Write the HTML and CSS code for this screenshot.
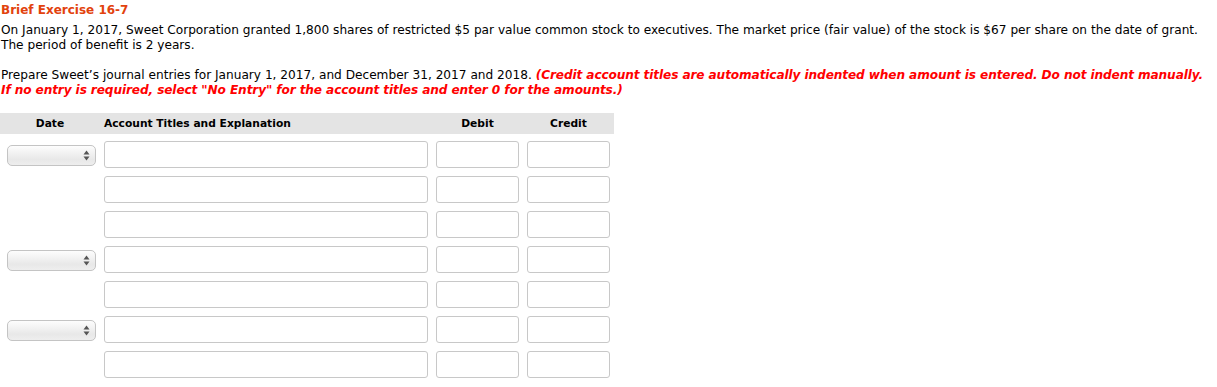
FILE: index.html
```html
<!DOCTYPE html>
<html lang="en">
<head>
  <meta charset="UTF-8" />
  <title>Brief Exercise 16-7</title>
  <link rel="stylesheet" href="styles.css">
</head>
<body>
  <h2 class="exercise-title">Brief Exercise 16-7</h2>

  <p class="question">
    On January 1, 2017, Sweet Corporation granted 1,800 shares of restricted $5 par value common stock to executives. The market price (fair value) of the stock is $67 per share on the date of grant. The period of benefit is 2 years.
    <br><br>
    Prepare Sweet’s journal entries for January 1, 2017, and December 31, 2017 and 2018.
    <span class="warning">(Credit account titles are automatically indented when amount is entered. Do not indent manually.</span><br>
    <span class="warning">If no entry is required, select "No Entry" for the account titles and enter 0 for the amounts.)</span>
  </p>

  <div class="journal">
    <div class="journal-head">
      <div class="col-date">Date</div>
      <div class="col-account">Account Titles and Explanation</div>
      <div class="col-amount">Debit</div>
      <div class="col-amount">Credit</div>
    </div>

    <div class="journal-row">
      <div class="cell"><div class="date-select"><svg width="7" height="11" viewBox="0 0 7 11"><path d="M3.5 0.5 L6.5 4.5 L0.5 4.5 Z M0.5 6.5 L6.5 6.5 L3.5 10.5 Z" fill="#555"/></svg></div></div>
      <div class="cell"><input type="text" class="field"></div>
      <div class="cell"><input type="text" class="field"></div>
      <div class="cell"><input type="text" class="field"></div>
    </div>
    <div class="journal-row">
      <div class="cell"></div>
      <div class="cell"><input type="text" class="field"></div>
      <div class="cell"><input type="text" class="field"></div>
      <div class="cell"><input type="text" class="field"></div>
    </div>
    <div class="journal-row">
      <div class="cell"></div>
      <div class="cell"><input type="text" class="field"></div>
      <div class="cell"><input type="text" class="field"></div>
      <div class="cell"><input type="text" class="field"></div>
    </div>

    <div class="journal-row">
      <div class="cell"><div class="date-select"><svg width="7" height="11" viewBox="0 0 7 11"><path d="M3.5 0.5 L6.5 4.5 L0.5 4.5 Z M0.5 6.5 L6.5 6.5 L3.5 10.5 Z" fill="#555"/></svg></div></div>
      <div class="cell"><input type="text" class="field"></div>
      <div class="cell"><input type="text" class="field"></div>
      <div class="cell"><input type="text" class="field"></div>
    </div>
    <div class="journal-row">
      <div class="cell"></div>
      <div class="cell"><input type="text" class="field"></div>
      <div class="cell"><input type="text" class="field"></div>
      <div class="cell"><input type="text" class="field"></div>
    </div>

    <div class="journal-row">
      <div class="cell"><div class="date-select"><svg width="7" height="11" viewBox="0 0 7 11"><path d="M3.5 0.5 L6.5 4.5 L0.5 4.5 Z M0.5 6.5 L6.5 6.5 L3.5 10.5 Z" fill="#555"/></svg></div></div>
      <div class="cell"><input type="text" class="field"></div>
      <div class="cell"><input type="text" class="field"></div>
      <div class="cell"><input type="text" class="field"></div>
    </div>
    <div class="journal-row">
      <div class="cell"></div>
      <div class="cell"><input type="text" class="field"></div>
      <div class="cell"><input type="text" class="field"></div>
      <div class="cell"><input type="text" class="field"></div>
    </div>
  </div>
</body>
</html>
```

FILE: styles.css
```css
:root {
  --title: #e2420d;
  --warn: #ff0000;
  --head-bg: #e4e4e4;
  --border: #c8c8c8;
  --text: #000;
}

* {
  box-sizing: border-box;
}

body {
  margin: 0;
  padding: 3px 0 0;
  font-family: 'DejaVu Sans', sans-serif;
  font-size: 12.15px;
  line-height: 15px;
  color: var(--text);
  background: #fff;
}

.exercise-title {
  margin: 0 0 5px 1px;
  font-size: 12px;
  line-height: 15px;
  font-weight: bold;
  color: var(--title);
}

.question {
  margin: 0 0 15px 1px;
}

.warning {
  color: var(--warn);
  font-weight: bold;
  font-style: italic;
  letter-spacing: -0.12px;
}

.journal {
  width: 614px;
}

.journal-head,
.journal-row {
  display: grid;
  grid-template-columns: 100px 332px 91px 91px;
}

.journal-head {
  background: var(--head-bg);
  height: 21px;
  align-items: center;
  font-size: 10.7px;
  font-weight: bold;
  margin-bottom: 3px;
}

.col-date,
.col-amount {
  text-align: center;
}

.col-account {
  padding-left: 4px;
}

.cell {
  padding: 4px;
  display: flex;
  align-items: center;
}

.cell:first-child {
  padding-left: 7px;
}

.field {
  width: 100%;
  height: 27px;
  margin: 0;
  border: 1px solid var(--border);
  border-radius: 3px;
  background: #fff;
  font: inherit;
}

.date-select {
  width: 89px;
  height: 21px;
  margin-top: 2px;
  border: 1px solid #c4c4c4;
  border-radius: 5px;
  background: linear-gradient(#fdfdfd, #e8e8e8 70%, #eeeeee);
  display: flex;
  align-items: center;
  justify-content: flex-end;
  padding-right: 5px;
}
```
